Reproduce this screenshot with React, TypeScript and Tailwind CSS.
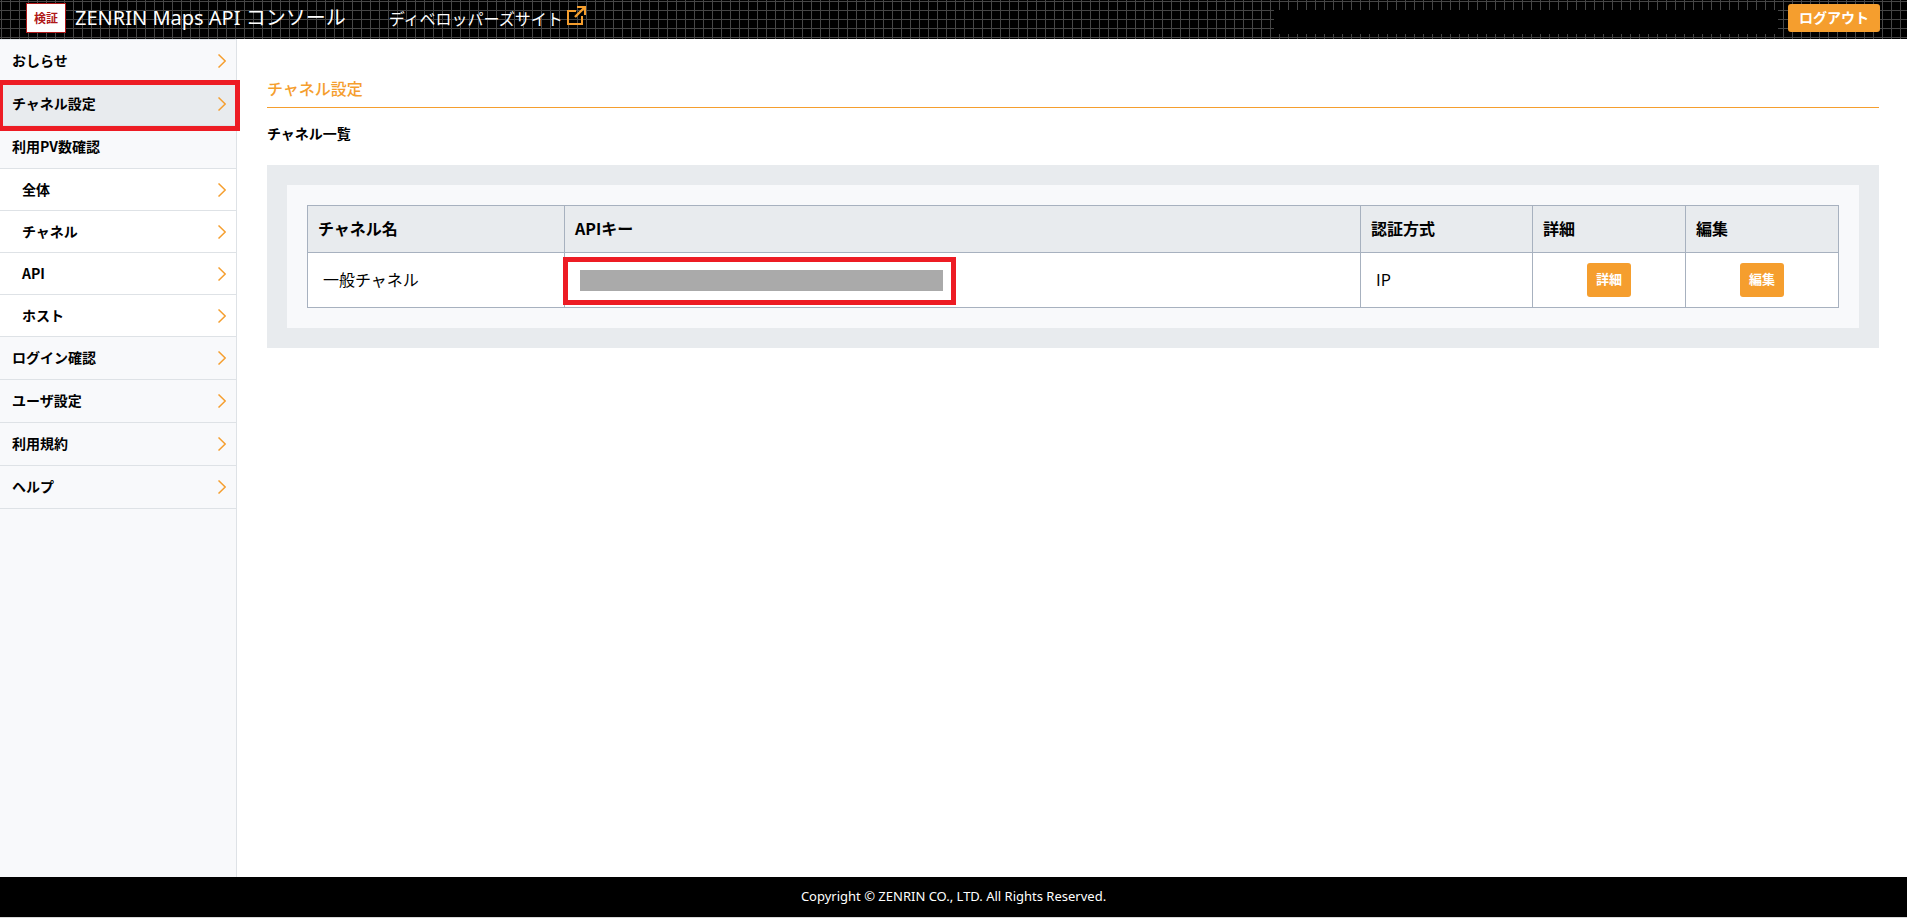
import type { ReactNode } from "react";

interface MenuItem {
  label: string;
  sub?: boolean;
  active?: boolean;
  heading?: boolean;
}

interface Channel {
  name: string;
  auth: string;
}

const menuItems: MenuItem[] = [
  { label: "おしらせ" },
  { label: "チャネル設定", active: true },
  { label: "利用PV数確認", heading: true },
  { label: "全体", sub: true },
  { label: "チャネル", sub: true },
  { label: "API", sub: true },
  { label: "ホスト", sub: true },
  { label: "ログイン確認" },
  { label: "ユーザ設定" },
  { label: "利用規約" },
  { label: "ヘルプ" },
];

const channels: Channel[] = [{ name: "一般チャネル", auth: "IP" }];

function Chevron() {
  return (
    <svg width="8" height="14" viewBox="0 0 8 14" fill="none" stroke="#f59e2e" strokeWidth="1.5" aria-hidden="true">
      <path d="M0.5 0.5 L7.2 7 L0.5 13.5" />
    </svg>
  );
}

function ExternalIcon() {
  return (
    <svg width="19" height="19" viewBox="0 0 19 19" fill="none" stroke="#f59e2e" strokeWidth="2" aria-hidden="true">
      <path d="M9 5 H1 V18 H15 V10" />
      <path d="M8 11 L17 2" strokeWidth="2.4" />
      <path d="M10 1 H18 V9" />
    </svg>
  );
}

function SmallButton({ children }: { children: ReactNode }) {
  return (
    <button
      type="button"
      className="h-[34px] w-[44px] rounded-[3px] bg-[#f59e2e] pb-[2px] text-[13px] font-bold text-white"
    >
      {children}
    </button>
  );
}

function Sidebar() {
  return (
    <nav className="w-[237px] shrink-0 border-r border-[#dee2e6] bg-[#f8f9fb]">
      <ul className="border-t border-[#dee2e6]">
        {menuItems.map((item) => {
          const row = item.sub ? "h-[42px] bg-white pl-[22px]" : "h-[43px] pl-3";
          return (
            <li key={item.label} className="relative">
              {item.heading ? (
                <div className={`flex items-center border-b border-[#dee2e6] text-sm font-bold ${row}`}>
                  <span className="pb-[2px]">{item.label}</span>
                </div>
              ) : (
                <a
                  href="#"
                  className={`flex items-center justify-between border-b border-[#dee2e6] pr-[10px] text-sm font-bold ${row} ${
                    item.active ? "bg-[#e8ebee]" : ""
                  }`}
                >
                  <span className="pb-[2px]">{item.label}</span>
                  <Chevron />
                </a>
              )}
              {item.active && (
                <span className="pointer-events-none absolute -top-[3px] -right-1 -bottom-[5px] left-0 z-10 border-5 border-l-3 border-[#ed1c24]" />
              )}
            </li>
          );
        })}
      </ul>
    </nav>
  );
}

export default function App() {
  return (
    <div className="flex min-h-screen flex-col bg-white font-['Noto_Sans_CJK_JP',sans-serif] text-black">
      <header className="flex h-[39px] items-center bg-black bg-[linear-gradient(#464646_1px,transparent_1px),linear-gradient(90deg,#464646_1px,transparent_1px)] bg-size-[9px_9px] bg-position-[1px_1px] pr-[27px] pl-[26px] text-white">
        <span className="mb-[3px] flex h-[30px] w-10 shrink-0 items-center justify-center border border-[#b01818] bg-white text-xs font-bold text-[#b01818]">
          検証
        </span>
        <h1 className="mb-[3px] ml-[9px] font-['Noto_Sans','Noto_Sans_CJK_JP',sans-serif] text-xl whitespace-nowrap">
          ZENRIN Maps API コンソール
        </h1>
        <a href="#" className="mb-1 ml-[43px] flex items-center gap-1 text-base whitespace-nowrap">
          ディベロッパーズサイト
          <span className="pb-1">
            <ExternalIcon />
          </span>
        </a>
        <div className="mt-[5px] mr-[10px] ml-auto h-6 w-[504px] bg-black" />
        <button
          type="button"
          className="mb-[3px] h-7 w-[92px] shrink-0 rounded-[3px] bg-[#f59e2e] pb-[2px] text-sm font-bold text-white"
        >
          ログアウト
        </button>
      </header>

      <div className="flex grow">
        <Sidebar />
        <main className="grow pt-[35px] pr-7 pl-[30px]">
          <h2 className="border-b border-[#f59e2e] pb-[5px] text-base leading-7 font-medium text-[#f59e2e]">
            チャネル設定
          </h2>
          <h3 className="mt-[15px] text-sm font-bold">チャネル一覧</h3>

          <div className="mt-[22px] bg-[#e8ebee] p-5">
            <div className="bg-[#f8f9fb] p-5">
              <table className="w-full table-fixed border-collapse text-base">
                <colgroup>
                  <col className="w-[257px]" />
                  <col />
                  <col className="w-[172px]" />
                  <col className="w-[153px]" />
                  <col className="w-[153px]" />
                </colgroup>
                <thead>
                  <tr className="h-[47px] bg-[#e8ebee] text-left">
                    {["チャネル名", "APIキー", "認証方式", "詳細", "編集"].map((label) => (
                      <th key={label} scope="col" className="border border-[#a7b1bf] px-[10px] pb-[3px] font-bold">
                        {label}
                      </th>
                    ))}
                  </tr>
                </thead>
                <tbody>
                  {channels.map((channel) => (
                    <tr key={channel.name} className="h-[55px] bg-white">
                      <td className="border border-[#a7b1bf] px-[15px] pb-[3px]">{channel.name}</td>
                      <td className="relative border border-[#a7b1bf] px-[15px]">
                        {/* masked key */}
                        <div className="h-[21px] w-[363px] bg-[#aaaaaa]" />
                        <span className="pointer-events-none absolute top-1 -left-[2px] h-12 w-[393px] border-5 border-[#ed1c24]" />
                      </td>
                      <td className="border border-[#a7b1bf] px-[15px] pb-[3px]">{channel.auth}</td>
                      <td className="border border-[#a7b1bf] text-center">
                        <SmallButton>詳細</SmallButton>
                      </td>
                      <td className="border border-[#a7b1bf] text-center">
                        <SmallButton>編集</SmallButton>
                      </td>
                    </tr>
                  ))}
                </tbody>
              </table>
            </div>
          </div>
        </main>
      </div>

      <footer className="flex h-[41px] items-center justify-center border-b border-[#d9d9d9] bg-black font-['Noto_Sans',sans-serif] text-[13px] text-white">
        Copyright © ZENRIN CO., LTD. All Rights Reserved.
      </footer>
    </div>
  );
}
